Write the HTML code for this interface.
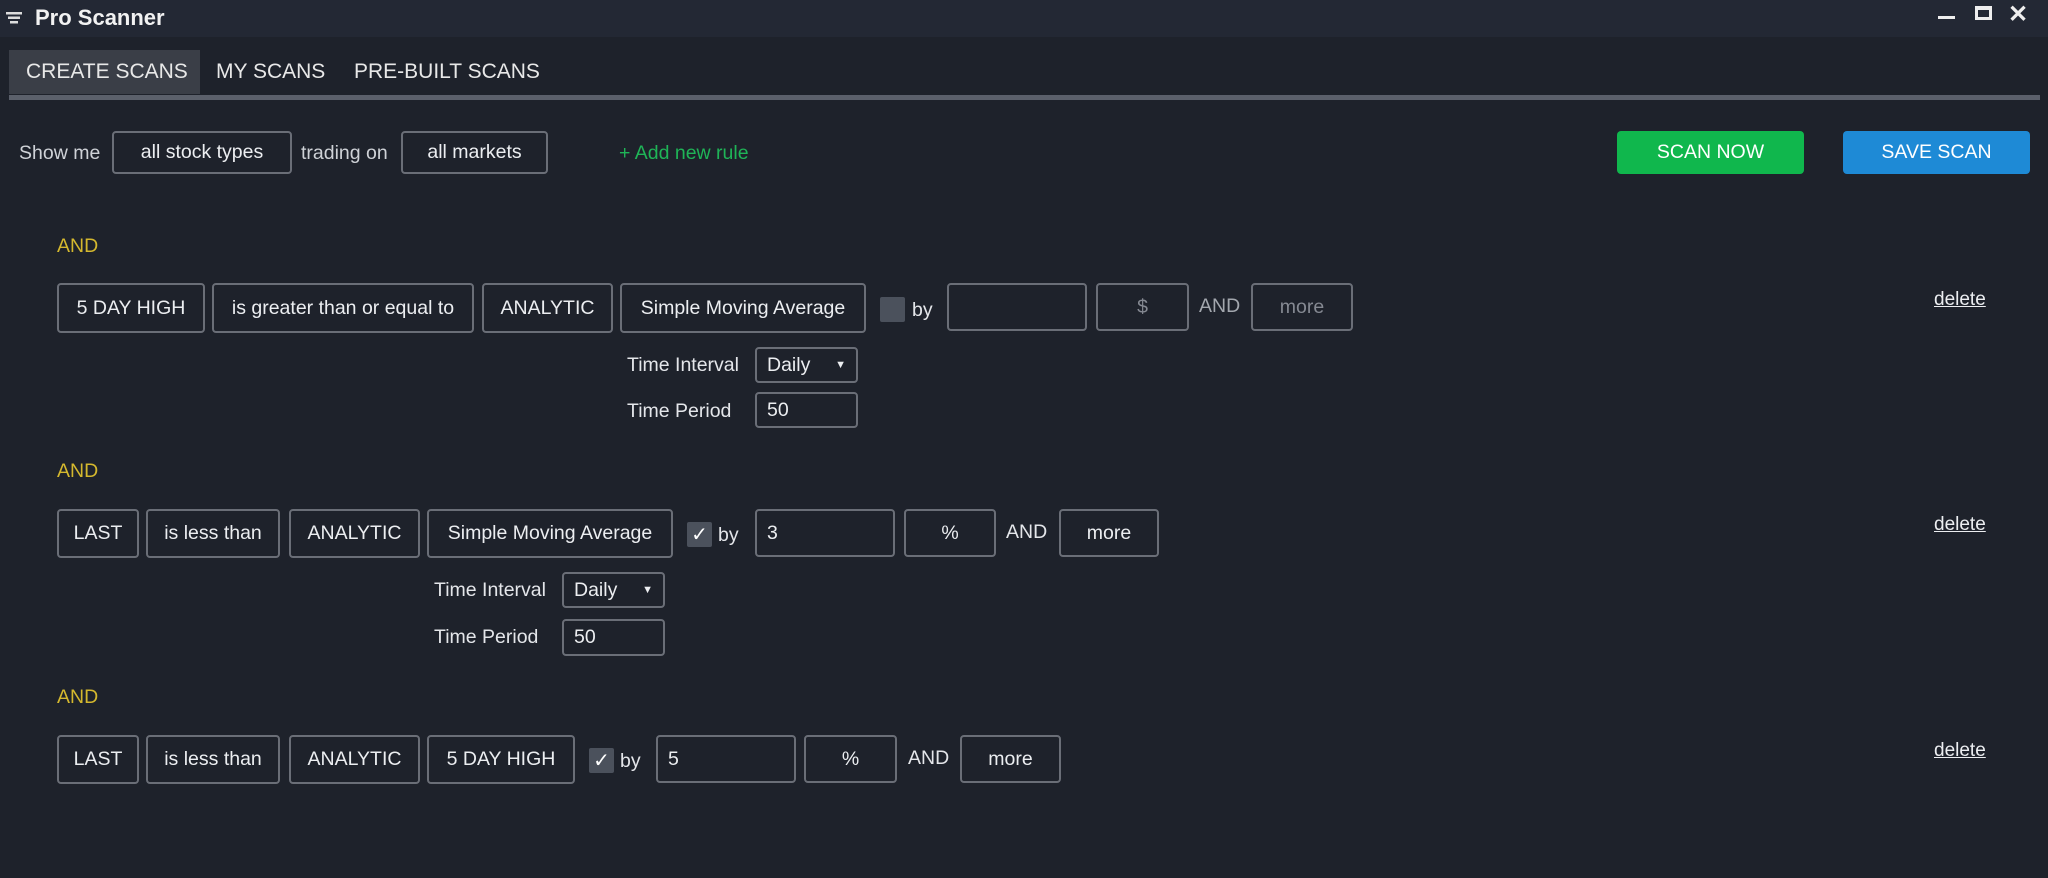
<!DOCTYPE html>
<html><head><style>
body{margin:0;width:2048px;height:878px;background:#1e222b;font-family:"Liberation Sans",Arial,sans-serif;color:#e4e6ea;overflow:hidden;position:relative}
.a{position:absolute}
.b{position:absolute;box-sizing:border-box;border:2px solid #6a6e77;border-radius:4px;display:flex;align-items:center;justify-content:center;font-size:19.5px;color:#eceef1}
.l{position:absolute;font-size:19.5px;line-height:20px}
.y{position:absolute;font-size:19.5px;color:#d4b82e}
.cb{position:absolute;background:#4b515c;border-radius:2px;color:#fff;font-size:20px;display:flex;align-items:center;justify-content:center}
.del{position:absolute;font-size:19px;text-decoration:underline;color:#eceef1}
.lt{justify-content:flex-start;padding-left:10px}
</style></head><body>
<div class="a" style="left:0;top:0;width:2048px;height:37px;background:#232834"></div>
<svg class="a" style="left:6px;top:12px" width="16" height="14"><rect x="0" y="0" width="16" height="2.5" fill="#ddd"/><rect x="2" y="4.5" width="12" height="2.5" fill="#ddd"/><rect x="4" y="9" width="8" height="2.5" fill="#ddd"/></svg>
<div class="a" style="left:35px;top:5px;font-size:22px;font-weight:bold;color:#f2f2f2">Pro Scanner</div>
<div class="a" style="left:1938px;top:16px;width:17px;height:3px;background:#eee"></div>
<div class="a" style="left:1975px;top:6px;width:17px;height:14px;box-sizing:border-box;border:3px solid #eee;border-top-width:4px"></div>
<div class="a" style="left:2008px;top:0px;font-size:24px;font-weight:bold;color:#eee">✕</div>
<div class="a" style="left:9px;top:50px;width:191px;height:44px;background:#3a3e47"></div>
<div class="a" style="left:26px;top:60px;font-size:21px;color:#e8e8e8">CREATE SCANS</div>
<div class="a" style="left:216px;top:60px;font-size:21px;color:#e8e8e8">MY SCANS</div>
<div class="a" style="left:354px;top:60px;font-size:21px;color:#e8e8e8">PRE-BUILT SCANS</div>
<div class="a" style="left:9px;top:95px;width:2031px;height:5px;background:#5b606b"></div>
<div class="l" style="left:19px;top:143px;color:#cfd2d7">Show me</div>
<div class="b" style="left:112px;top:131px;width:180px;height:43px">all stock types</div>
<div class="l" style="left:301px;top:143px;color:#cfd2d7">trading on</div>
<div class="b" style="left:401px;top:131px;width:147px;height:43px">all markets</div>
<div class="l" style="left:619px;top:143px;color:#1fb457">+ Add new rule</div>
<div class="b" style="left:1617px;top:131px;width:187px;height:43px;background:#10b74d;border:none;color:#fff">SCAN NOW</div>
<div class="b" style="left:1843px;top:131px;width:187px;height:43px;background:#1e8ad6;border:none;color:#fff">SAVE SCAN</div>

<div class="y" style="left:57px;top:235px">AND</div>
<div class="b" style="left:57px;top:283px;width:148px;height:50px">5 DAY HIGH</div>
<div class="b" style="left:212px;top:283px;width:262px;height:50px">is greater than or equal to</div>
<div class="b" style="left:482px;top:283px;width:131px;height:50px">ANALYTIC</div>
<div class="b" style="left:620px;top:283px;width:246px;height:50px">Simple Moving Average</div>
<div class="cb" style="left:880px;top:297px;width:25px;height:25px"></div>
<div class="l" style="left:912px;top:300px">by</div>
<div class="b" style="left:947px;top:283px;width:140px;height:48px"></div>
<div class="b" style="left:1096px;top:283px;width:93px;height:48px;color:#858992">$</div>
<div class="l" style="left:1199px;top:296px;color:#a3a7ae">AND</div>
<div class="b" style="left:1251px;top:283px;width:102px;height:48px;color:#858992">more</div>
<div class="del" style="left:1934px;top:289px">delete</div>
<div class="l" style="left:627px;top:355px">Time Interval</div>
<div class="b lt" style="left:755px;top:347px;width:103px;height:36px">Daily<span style="position:absolute;right:10px;font-size:11px">▼</span></div>
<div class="l" style="left:627px;top:401px">Time Period</div>
<div class="b lt" style="left:755px;top:392px;width:103px;height:36px">50</div>

<div class="y" style="left:57px;top:460px">AND</div>
<div class="b" style="left:57px;top:509px;width:82px;height:49px">LAST</div>
<div class="b" style="left:146px;top:509px;width:134px;height:49px">is less than</div>
<div class="b" style="left:289px;top:509px;width:131px;height:49px">ANALYTIC</div>
<div class="b" style="left:427px;top:509px;width:246px;height:49px">Simple Moving Average</div>
<div class="cb" style="left:687px;top:522px;width:25px;height:25px">✓</div>
<div class="l" style="left:718px;top:525px">by</div>
<div class="b lt" style="left:755px;top:509px;width:140px;height:48px">3</div>
<div class="b" style="left:904px;top:509px;width:92px;height:48px">%</div>
<div class="l" style="left:1006px;top:522px">AND</div>
<div class="b" style="left:1059px;top:509px;width:100px;height:48px">more</div>
<div class="del" style="left:1934px;top:514px">delete</div>
<div class="l" style="left:434px;top:580px">Time Interval</div>
<div class="b lt" style="left:562px;top:572px;width:103px;height:36px">Daily<span style="position:absolute;right:10px;font-size:11px">▼</span></div>
<div class="l" style="left:434px;top:627px">Time Period</div>
<div class="b lt" style="left:562px;top:619px;width:103px;height:37px">50</div>

<div class="y" style="left:57px;top:686px">AND</div>
<div class="b" style="left:57px;top:735px;width:82px;height:49px">LAST</div>
<div class="b" style="left:146px;top:735px;width:134px;height:49px">is less than</div>
<div class="b" style="left:289px;top:735px;width:131px;height:49px">ANALYTIC</div>
<div class="b" style="left:427px;top:735px;width:148px;height:49px">5 DAY HIGH</div>
<div class="cb" style="left:589px;top:748px;width:25px;height:25px">✓</div>
<div class="l" style="left:620px;top:751px">by</div>
<div class="b lt" style="left:656px;top:735px;width:140px;height:48px">5</div>
<div class="b" style="left:804px;top:735px;width:93px;height:48px">%</div>
<div class="l" style="left:908px;top:748px">AND</div>
<div class="b" style="left:960px;top:735px;width:101px;height:48px">more</div>
<div class="del" style="left:1934px;top:740px">delete</div>
</body></html>
